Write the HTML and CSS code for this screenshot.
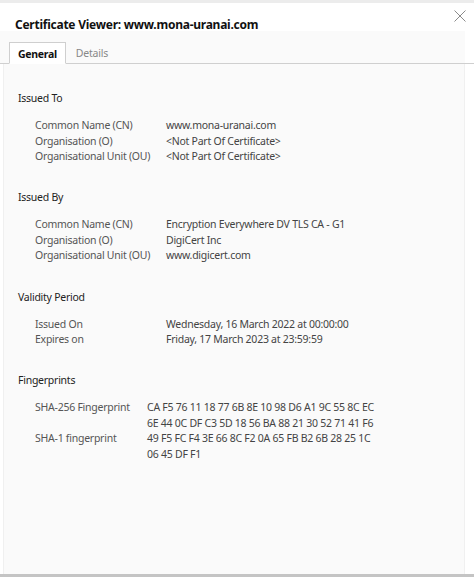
FILE: index.html
```html
<!DOCTYPE html>
<html>
<head>
<meta charset="utf-8">
<link rel="stylesheet" href="styles.css">
</head>
<body>
<div class="dialog">
  <div class="titlebar">
    <div class="title">Certificate Viewer: www.mona-uranai.com</div>
    <svg class="close" width="12" height="12" viewBox="0 0 12 12"><path d="M0.5 0.5L11.5 11.5M11.5 0.5L0.5 11.5" stroke="#8a8a8a" stroke-width="1" fill="none"/></svg>
  </div>
  <div class="tabs">
    <div class="tab active">General</div>
    <div class="tab">Details</div>
  </div>
  <div class="content">
    <section class="sec">
      <div class="head">Issued To</div>
      <div class="rows">
        <div class="lbl">Common Name (CN)</div><div class="val">www.mona-uranai.com</div>
        <div class="lbl">Organisation (O)</div><div class="val">&lt;Not Part Of Certificate&gt;</div>
        <div class="lbl">Organisational Unit (OU)</div><div class="val">&lt;Not Part Of Certificate&gt;</div>
      </div>
    </section>
    <section class="sec">
      <div class="head">Issued By</div>
      <div class="rows">
        <div class="lbl">Common Name (CN)</div><div class="val">Encryption Everywhere DV TLS CA - G1</div>
        <div class="lbl">Organisation (O)</div><div class="val">DigiCert Inc</div>
        <div class="lbl">Organisational Unit (OU)</div><div class="val">www.digicert.com</div>
      </div>
    </section>
    <section class="sec">
      <div class="head">Validity Period</div>
      <div class="rows">
        <div class="lbl">Issued On</div><div class="val">Wednesday, 16 March 2022 at 00:00:00</div>
        <div class="lbl">Expires on</div><div class="val">Friday, 17 March 2023 at 23:59:59</div>
      </div>
    </section>
    <section class="sec">
      <div class="head">Fingerprints</div>
      <div class="rows fp">
        <div class="lbl">SHA-256 Fingerprint</div><div class="val">CA F5 76 11 18 77 6B 8E 10 98 D6 A1 9C 55 8C EC<br>6E 44 0C DF C3 5D 18 56 BA 88 21 30 52 71 41 F6</div>
        <div class="lbl">SHA-1 fingerprint</div><div class="val">49 F5 FC F4 3E 66 8C F2 0A 65 FB B2 6B 28 25 1C<br>06 45 DF F1</div>
      </div>
    </section>
  </div>
</div>
</body>
</html>
```
FILE: styles.css
```css
html, body {
  margin: 0;
  padding: 0;
}
body {
  width: 474px;
  height: 577px;
  background: #ececec;
  font-family: "Noto Sans", "Open Sans", sans-serif;
  overflow: hidden;
}
.dialog {
  margin-top: 3px;
  height: 571px;
  background: #ffffff;
  border-bottom: 3px solid #c4c4c4;
  display: flex;
  flex-direction: column;
}
.titlebar {
  height: 28px;
  position: relative;
  display: flex;
  align-items: flex-end;
  padding-left: 15px;
}
.title {
  font-size: 12px;
  letter-spacing: -0.25px;
  font-weight: 700;
  color: #111;
  line-height: 16px;
  margin-bottom: -2px;
}
.close {
  position: absolute;
  right: 8px;
  top: 7px;
}
.tabs {
  background: linear-gradient(to right, #fafafa 465px, #ffffff 465px);
  height: 33px;
  box-sizing: border-box;
  border-bottom: 1px solid #cfcfcf;
  display: flex;
  align-items: flex-end;
  padding-left: 9px;
}
.tab {
  font-size: 10.5px;
  letter-spacing: -0.2px;
  color: #888;
  height: 22px;
  line-height: 19px;
  padding: 2px 10px 0;
  box-sizing: border-box;
  margin-bottom: -1px;
}
.tab.active {
  background: #ffffff;
  color: #111;
  font-weight: 700;
  letter-spacing: -0.3px;
  border: 1px solid #cfcfcf;
  border-bottom: 1px solid #ffffff;
  padding: 2px 8px 0;
}
.content {
  flex: 1;
  background: #fafafa;
  margin: 0 9px 0 3px;
  border-left: 1px solid #f0f0f0;
  border-right: 1px solid #f0f0f0;
  padding: 26px 0 0 14px;
}
.sec {
  margin-bottom: 24.5px;
}
.head {
  font-size: 10.5px;
  letter-spacing: -0.25px;
  color: #222;
  line-height: 16px;
  margin-bottom: 12px;
}
.rows {
  display: grid;
  grid-template-columns: 131px 1fr;
  padding-left: 17px;
  font-size: 10.5px;
  letter-spacing: -0.25px;
  line-height: 15.6px;
  color: #555;
}
.rows.fp {
  grid-template-columns: 112px 1fr;
}
.val {
  color: #444;
}
```
